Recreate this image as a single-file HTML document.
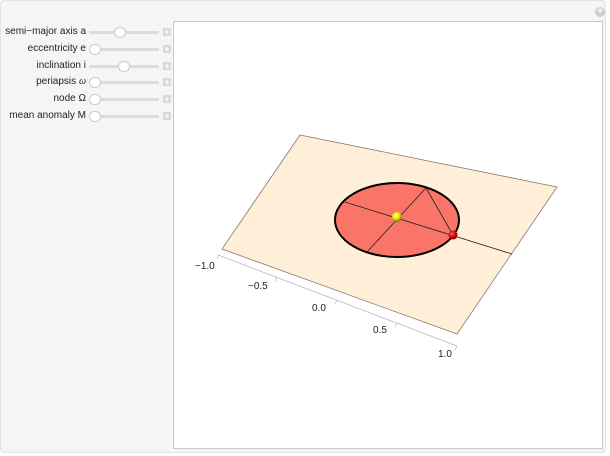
<!DOCTYPE html>
<html><head><style>
body{margin:0;width:610px;height:456px;background:#fff;font-family:"Liberation Sans",sans-serif;overflow:hidden}
.panel{position:absolute;left:0;top:0;width:606px;height:453px;background:#f5f5f5;border:1px solid #e4e4e4;border-radius:4px;box-sizing:border-box}
.plot{position:absolute;left:173px;top:21px;width:430px;height:428px;background:#fff;border:1px solid #c8c8c8;box-sizing:border-box}
.row{position:absolute;left:0;height:14px;font-size:10px;color:#222}
.lab{position:absolute;white-space:nowrap;top:0;line-height:14px}
.track{position:absolute;left:89px;top:6px;width:70px;height:3px;background:#dcdcdc;border-radius:2px}
.knob{position:absolute;top:2px;width:12px;height:11px;background:#fff;border:1px solid #ccc;border-radius:6px;box-sizing:border-box}
.plus{position:absolute;left:163px;top:3px;width:8px;height:8px;background:#d8d8d8;border-radius:1px;color:#fff;font-size:9px;line-height:8px;text-align:center;font-weight:bold}
</style></head><body>
<div class="panel"></div>
<div style="position:absolute;left:595px;top:7px;width:10px;height:10px;border-radius:5px;background:#cfcfcf;color:#fff;font-size:10px;line-height:10px;text-align:center;font-weight:bold">+</div>
<div class="row" style="top:25px;width:180px"><span class="lab" style="right:94px">semi−major axis a</span><div class="track"></div><div class="knob" style="left:114px"></div><div class="plus">+</div></div>
<div class="row" style="top:42px;width:180px"><span class="lab" style="right:94px">eccentricity e</span><div class="track"></div><div class="knob" style="left:89px"></div><div class="plus">+</div></div>
<div class="row" style="top:59px;width:180px"><span class="lab" style="right:94px">inclination i</span><div class="track"></div><div class="knob" style="left:118px"></div><div class="plus">+</div></div>
<div class="row" style="top:75px;width:180px"><span class="lab" style="right:94px">periapsis <i style="font-family:'Liberation Serif',serif">ω</i></span><div class="track"></div><div class="knob" style="left:89px"></div><div class="plus">+</div></div>
<div class="row" style="top:92px;width:180px"><span class="lab" style="right:94px">node Ω</span><div class="track"></div><div class="knob" style="left:89px"></div><div class="plus">+</div></div>
<div class="row" style="top:109px;width:180px"><span class="lab" style="right:94px">mean anomaly M</span><div class="track"></div><div class="knob" style="left:89px"></div><div class="plus">+</div></div>
<div class="plot"></div>
<svg style="position:absolute;left:0;top:0" width="610" height="456">
<defs>
<radialGradient id="y" cx="0.4" cy="0.35" r="0.6"><stop offset="0" stop-color="#ffff80"/><stop offset="0.6" stop-color="#e8e000"/><stop offset="1" stop-color="#8a7a00"/></radialGradient>
<radialGradient id="r" cx="0.4" cy="0.35" r="0.6"><stop offset="0" stop-color="#ff6060"/><stop offset="0.6" stop-color="#e00000"/><stop offset="1" stop-color="#800000"/></radialGradient>
</defs>
<polygon points="300,135 557,187 457,334 222,249" fill="#ffefd8" stroke="#8a7a6a" stroke-width="0.8"/>
<ellipse cx="397" cy="220" rx="62" ry="37" fill="#fa7467" stroke="#000" stroke-width="2"/>
<line x1="345" y1="202" x2="512" y2="254" stroke="#222" stroke-width="0.8"/>
<line x1="367" y1="252" x2="426" y2="188" stroke="#222" stroke-width="0.8"/>
<line x1="426" y1="188" x2="453" y2="235" stroke="#222" stroke-width="0.8"/>
<circle cx="397" cy="217" r="5" fill="url(#y)"/>
<circle cx="453" cy="235" r="4.5" fill="url(#r)"/>
<g stroke="#bbb" stroke-width="0.8">
<line x1="218" y1="255" x2="457" y2="346"/>
<line x1="219" y1="255" x2="217" y2="259"/><line x1="277" y1="277" x2="275" y2="281"/><line x1="337" y1="300" x2="335" y2="304"/><line x1="397" y1="323" x2="395" y2="327"/><line x1="457" y1="346" x2="455" y2="350"/>
</g>
<g font-size="10" fill="#222" font-family="Liberation Sans, sans-serif">
<text x="195" y="269">−1.0</text><text x="248" y="289">−0.5</text><text x="312" y="311">0.0</text><text x="373" y="333">0.5</text><text x="438" y="357">1.0</text>
</g>
</svg>
</body></html>
